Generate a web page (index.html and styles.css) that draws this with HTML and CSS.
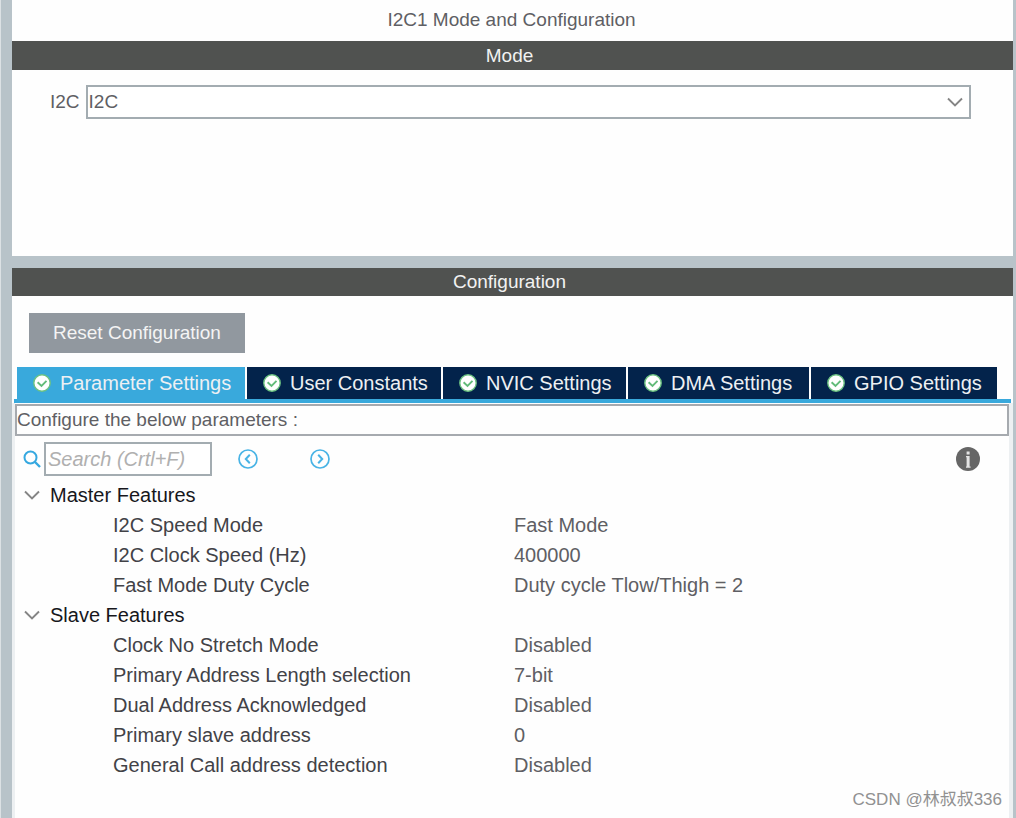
FILE: index.html
```html
<!DOCTYPE html>
<html lang="en">
<head>
<meta charset="utf-8">
<title>I2C1 Mode and Configuration</title>
<link rel="stylesheet" href="styles.css">
</head>
<body>
<svg class="sprite" aria-hidden="true">
  <symbol id="check" viewBox="0 0 18 18"><circle cx="9" cy="9" r="8.2" fill="#fff" stroke="#6cc281" stroke-width="1.4"/><path d="M4.6 8.2l3.9 3.8 5-5.2" fill="none" stroke="#62bb79" stroke-width="1.9"/></symbol>
  <symbol id="chevron" viewBox="0 0 16 10"><path d="M1 1.5l7 7 7-7" fill="none" stroke="#858585" stroke-width="1.9"/></symbol>
</svg>
<main class="app">
  <section class="panel panel-mode">
    <h1 class="title">I2C1 Mode and Configuration</h1>
    <h2 class="bar">Mode</h2>
    <div class="mode-row">
      <label for="mode">I2C</label>
      <div class="select-wrap">
        <select id="mode" class="select"><option>I2C</option></select>
        <svg class="select-arrow" aria-hidden="true"><use href="#chevron"/></svg>
      </div>
    </div>
  </section>
  <section class="panel panel-config">
    <h2 class="bar">Configuration</h2>
    <button class="reset" type="button">Reset Configuration</button>
    <div class="tabs" role="tablist">
      <button class="tab tab-active" type="button" role="tab" aria-selected="true"><svg class="check" aria-hidden="true"><use href="#check"/></svg>Parameter Settings</button>
      <button class="tab" type="button" role="tab" aria-selected="false"><svg class="check" aria-hidden="true"><use href="#check"/></svg>User Constants</button>
      <button class="tab" type="button" role="tab" aria-selected="false"><svg class="check" aria-hidden="true"><use href="#check"/></svg>NVIC Settings</button>
      <button class="tab" type="button" role="tab" aria-selected="false"><svg class="check" aria-hidden="true"><use href="#check"/></svg>DMA Settings</button>
      <button class="tab" type="button" role="tab" aria-selected="false"><svg class="check" aria-hidden="true"><use href="#check"/></svg>GPIO Settings</button>
    </div>
    <div class="tab-body">
      <p class="hint">Configure the below parameters :</p>
      <div class="toolbar">
        <label class="search-label" for="search" aria-label="Search"><svg class="icon-search" viewBox="0 0 18 18" aria-hidden="true"><circle cx="7.5" cy="7.5" r="6" fill="none" stroke="#35a8e0" stroke-width="2"/><path d="M12 12l5 5" stroke="#35a8e0" stroke-width="2.4"/></svg></label>
        <input id="search" class="search" type="text" placeholder="Search (Crtl+F)">
        <button class="nav nav-prev" type="button" aria-label="Previous"><svg viewBox="0 0 20 20"><circle cx="10" cy="10" r="9" fill="none" stroke="#48b3e5" stroke-width="1.7"/><path d="M11.8 5.8L7.8 10l4 4.2" fill="none" stroke="#48b3e5" stroke-width="2"/></svg></button>
        <button class="nav nav-next" type="button" aria-label="Next"><svg viewBox="0 0 20 20"><circle cx="10" cy="10" r="9" fill="none" stroke="#48b3e5" stroke-width="1.7"/><path d="M8.2 5.8l4 4.2-4 4.2" fill="none" stroke="#48b3e5" stroke-width="2"/></svg></button>
        <button class="nav info" type="button" aria-label="Information"><svg viewBox="0 0 24 24"><circle cx="12" cy="12" r="12" fill="#666"/><path d="M10.6 4.5h3v3h-3zM10 9h3.6v10.5h1v1.2H10v-1.2h.6v-9.300H10z" fill="#e4e4e4"/></svg></button>
      </div>
      <table class="params">
        <colgroup><col class="col-name"><col></colgroup>
        <tbody>
          <tr><th colspan="2" class="group"><button class="toggle" type="button" aria-expanded="true"><svg class="chevron" aria-hidden="true"><use href="#chevron"/></svg>Master Features</button></th></tr>
          <tr><th>I2C Speed Mode</th><td>Fast Mode</td></tr>
          <tr><th>I2C Clock Speed (Hz)</th><td>400000</td></tr>
          <tr><th>Fast Mode Duty Cycle</th><td>Duty cycle Tlow/Thigh = 2</td></tr>
        </tbody>
        <tbody>
          <tr><th colspan="2" class="group"><button class="toggle" type="button" aria-expanded="true"><svg class="chevron" aria-hidden="true"><use href="#chevron"/></svg>Slave Features</button></th></tr>
          <tr><th>Clock No Stretch Mode</th><td>Disabled</td></tr>
          <tr><th>Primary Address Length selection</th><td>7-bit</td></tr>
          <tr><th>Dual Address Acknowledged</th><td>Disabled</td></tr>
          <tr><th>Primary slave address</th><td>0</td></tr>
          <tr><th>General Call address detection</th><td>Disabled</td></tr>
        </tbody>
      </table>
    </div>
  </section>
</main>
<div class="watermark">CSDN @林叔叔336</div>
</body>
</html>
```
FILE: styles.css
```css
* { box-sizing: border-box; }
body {
  margin: 0;
  font: 20px/30px "Liberation Sans", Arial, sans-serif;
  color: #5f5f64;
}
button, input, select { font: inherit; color: inherit; margin: 0; border-radius: 0; }
button { border: 0; padding: 0; background: none; }
svg { display: block; flex: none; }
.sprite { position: absolute; width: 0; height: 0; }
.app {
  display: flex;
  flex-direction: column;
  gap: 12px;
  min-height: 100vh;
  padding: 0 3px 0 11px;
  border-left: 1px solid #dce1e4;
  background: #b8c3c9;
}
.panel { background: #fefefe; }
.panel-mode { min-height: 256px; }
.panel-config {
  display: flex;
  flex-direction: column;
  flex: 1;
}
.title {
  margin: 0;
  padding: 5px 2px 6px 0;
  font-size: 19px;
  line-height: 30px;
  font-weight: 400;
  text-align: center;
}
.bar {
  margin: 0;
  padding-right: 6px;
  background: #505250;
  color: #f2f2f2;
  font-size: 19px;
  line-height: 28px;
  font-weight: 400;
  text-align: center;
}
.title + .bar { line-height: 29px; }
.mode-row {
  display: flex;
  align-items: center;
  gap: 6px;
  padding: 15px 42px 0 38px;
  font-size: 19px;
}
.select-wrap { position: relative; flex: 1; }
.select {
  display: block;
  appearance: none;
  width: 100%;
  height: 34px;
  padding: 0 32px 0 1px;
  border: 2px solid #a3acb1;
  background: #fff;
}
.select-arrow {
  position: absolute;
  right: 8px;
  top: 12px;
  width: 16px;
  height: 10px;
  pointer-events: none;
}
.reset {
  align-self: flex-start;
  margin: 17px 0 0 17px;
  padding: 5px 24px;
  background: #91989f;
  color: #f4f4f4;
  font-size: 19px;
}
.tabs {
  display: grid;
  grid-template-columns: 228fr 194fr 183fr 181fr 186fr;
  gap: 2px;
  margin: 14px 2px 0;
  padding: 0 14px 0 3px;
  border-bottom: 4px solid #39a9dc;
}
.tab {
  display: flex;
  align-items: center;
  gap: 9px;
  height: 32px;
  padding-left: 16px;
  background: #03234b;
  color: #edf0f3;
  white-space: nowrap;
}
.tab-active { background: #39a9dc; }
.check { width: 18px; height: 18px; }
.tab-body {
  flex: 1;
  padding-top: 1px;
  border: solid #edf0f2;
  border-width: 0 4px 0 3px;
}
.hint {
  margin: 0;
  border: 2px solid #a6aaaf;
  font-size: 19px;
  line-height: 28px;
}
.toolbar {
  display: flex;
  align-items: center;
  padding: 6px 29px 4px 8px;
}
.search-label { margin-right: 3px; }
.icon-search { width: 18px; height: 18px; }
.search {
  width: 168px;
  height: 34px;
  padding: 0 2px;
  border: 2px solid #a3acb1;
  background: #fff;
  font-style: italic;
}
.search::placeholder { color: #b0b0b0; opacity: 1; }
.nav svg { width: 20px; height: 20px; }
.nav-prev { margin-left: 26px; }
.nav-next { margin-left: 52px; }
.info { margin-left: auto; }
.info svg { width: 24px; height: 24px; }
.params {
  width: 100%;
  table-layout: fixed;
  border-collapse: collapse;
}
.col-name { width: 50%; }
.params th, .params td {
  height: 30px;
  padding: 0;
  font-weight: 400;
  text-align: left;
  white-space: nowrap;
}
.params td { padding-left: 2px; }
.params th { padding-left: 98px; color: #424247; }
.params .group { padding-left: 9px; }
.toggle {
  display: flex;
  align-items: center;
  gap: 10px;
  color: #17171c;
}
.chevron { width: 16px; height: 10px; }
.watermark {
  position: absolute;
  right: 14px;
  bottom: 6px;
  font: 17px/24px "Liberation Sans", "Noto Sans CJK SC", sans-serif;
  color: #919191;
}
```
